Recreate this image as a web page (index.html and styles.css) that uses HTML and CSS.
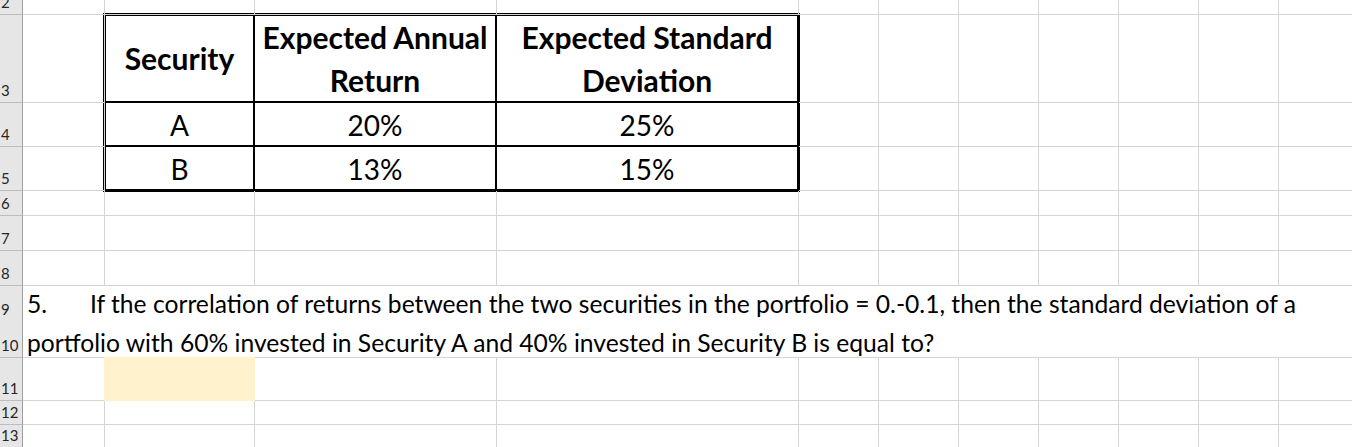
FILE: index.html
```html
<!DOCTYPE html>
<html lang="en">
<head>
<meta charset="utf-8">
<title>Portfolio question</title>
<link rel="stylesheet" href="styles.css">
</head>
<body>
<div class="sheet">
  <div class="grid">
    <!-- table overlay (rows 3-5, columns B-D) -->
    <div class="tbl">
      <div class="th">Security</div>
      <div class="th">Expected Annual<br>Return</div>
      <div class="th">Expected Standard<br>Deviation</div>
      <div class="td">A</div>
      <div class="td">20%</div>
      <div class="td">25%</div>
      <div class="td">B</div>
      <div class="td">13%</div>
      <div class="td">15%</div>
    </div>

    <!-- question text (rows 9-10) -->
    <div class="q">
      <p class="qtext"><span class="qnum">5.</span>If the correlation of returns between the two securities in the portfolio = 0.-0.1, then the standard deviation of a<br>portfolio with 60% invested in Security A and 40% invested in Security B is equal to?</p>
    </div>

    <!-- row 2 -->
    <div class="h">2</div>
    <div class="c"></div><div class="c"></div><div class="c"></div><div class="c"></div><div class="c"></div><div class="c"></div><div class="c"></div><div class="c"></div><div class="c"></div><div class="c"></div><div class="c"></div>
    <!-- row 3 -->
    <div class="h">3</div>
    <div class="c"></div>
    <div class="c"></div><div class="c"></div><div class="c"></div><div class="c"></div><div class="c"></div><div class="c"></div><div class="c"></div>
    <!-- row 4 -->
    <div class="h">4</div>
    <div class="c"></div>
    <div class="c"></div><div class="c"></div><div class="c"></div><div class="c"></div><div class="c"></div><div class="c"></div><div class="c"></div>
    <!-- row 5 -->
    <div class="h">5</div>
    <div class="c"></div>
    <div class="c"></div><div class="c"></div><div class="c"></div><div class="c"></div><div class="c"></div><div class="c"></div><div class="c"></div>
    <!-- row 6 -->
    <div class="h">6</div>
    <div class="c"></div><div class="c"></div><div class="c"></div><div class="c"></div><div class="c"></div><div class="c"></div><div class="c"></div><div class="c"></div><div class="c"></div><div class="c"></div><div class="c"></div>
    <!-- row 7 -->
    <div class="h">7</div>
    <div class="c"></div><div class="c"></div><div class="c"></div><div class="c"></div><div class="c"></div><div class="c"></div><div class="c"></div><div class="c"></div><div class="c"></div><div class="c"></div><div class="c"></div>
    <!-- row 8 -->
    <div class="h">8</div>
    <div class="c"></div><div class="c"></div><div class="c"></div><div class="c"></div><div class="c"></div><div class="c"></div><div class="c"></div><div class="c"></div><div class="c"></div><div class="c"></div><div class="c"></div>
    <!-- row 9 -->
    <div class="h h-open">9</div>
    <!-- row 10 -->
    <div class="h">10</div>
    <!-- row 11 -->
    <div class="h">11</div>
    <div class="c"></div>
    <div class="c c-yellow"></div>
    <div class="c"></div><div class="c"></div><div class="c"></div><div class="c"></div><div class="c"></div><div class="c"></div><div class="c"></div><div class="c"></div><div class="c"></div>
    <!-- row 12 -->
    <div class="h">12</div>
    <div class="c"></div><div class="c"></div><div class="c"></div><div class="c"></div><div class="c"></div><div class="c"></div><div class="c"></div><div class="c"></div><div class="c"></div><div class="c"></div><div class="c"></div>
    <!-- row 13 -->
    <div class="h">13</div>
    <div class="c"></div><div class="c"></div><div class="c"></div><div class="c"></div><div class="c"></div><div class="c"></div><div class="c"></div><div class="c"></div><div class="c"></div><div class="c"></div><div class="c"></div>
  </div>
</div>
</body>
</html>
```
FILE: styles.css
```css
html, body {
  margin: 0;
  padding: 0;
  background: #fff;
}

.sheet {
  width: 1352px;
  height: 447px;
  overflow: hidden;
  font-family: Lato, "Liberation Sans", sans-serif;
  color: #000;
}

.grid {
  display: grid;
  grid-template-columns: 23px 82px 150px 242px 302px repeat(7, 80px);
  grid-template-rows: 15px 88px 44px 44px 25px 35px 35px 36px 36px 43px 24px 23px;
  width: 1359px;
}

/* ordinary cells */
.c {
  border-right: 1px solid #d4d4d4;
  border-bottom: 1px solid #d4d4d4;
}

.c-yellow {
  background: #fff2cc;
  border-color: #fff2cc;
  margin: -1px 0 0 -1px;
}

/* row headers */
.h {
  grid-column: 1;
  background: #e6e6e6;
  border-right: 1px solid #9e9e9e;
  border-bottom: 1px solid #bdbdbd;
  display: flex;
  align-items: flex-end;
  padding: 0 0 4px 1px;
  font-size: 15px;
  line-height: 15px;
  color: #262626;
  overflow: hidden;
}

.h-open {
  border-bottom: 0;
  padding-bottom: 5px;
}

/* bordered table */
.tbl {
  grid-column: 3 / 6;
  grid-row: 2 / 5;
  margin: -2px -1px -1px -2px;
  display: grid;
  grid-template-columns: 147px 240px 300px;
  grid-template-rows: 85px 42px 42px;
  gap: 2px;
  border: 3px solid #000;
  background: #000;
}

.th,
.td {
  background: #fff;
  display: flex;
  align-items: center;
  justify-content: center;
  text-align: center;
}

.th {
  font-weight: 700;
  font-size: 30px;
  line-height: 43px;
}

.td {
  font-size: 28px;
  line-height: 42px;
  padding-top: 2px;
}

/* question */
.q {
  grid-column: 2 / -1;
  grid-row: 8 / 10;
  border-bottom: 1px solid #d4d4d4;
  padding-left: 4px;
}

.qtext {
  margin: -2px 0 0;
  font-size: 24.65px;
  line-height: 39px;
  white-space: nowrap;
}

.qnum {
  display: inline-block;
  width: 63px;
}
```
